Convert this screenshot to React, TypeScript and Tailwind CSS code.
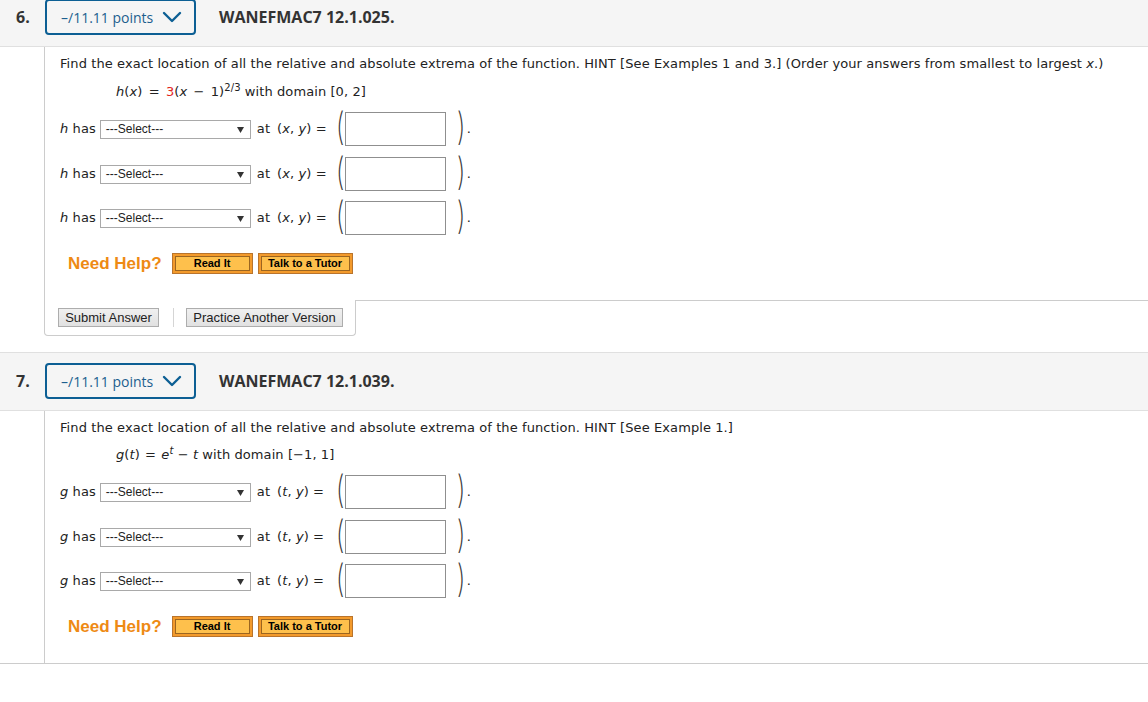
import React from "react";

const body = "font-['DejaVu_Sans',Verdana,sans-serif] text-[13px] text-[#222] tracking-[0.09px]";
const arial = "font-['Liberation_Sans',Arial,sans-serif] tracking-normal";

function Chevron() {
  return (
    <svg width="20" height="12" viewBox="0 0 20 12" className="ml-[9px]">
      <path d="M2 2 L10 10 L18 2" fill="none" stroke="#0c5f94" strokeWidth="2.4" strokeLinecap="round" strokeLinejoin="round" />
    </svg>
  );
}

function Header({ num, code, top }: { num: string; code: string; top?: boolean }) {
  return (
    <div
      className={`flex items-center bg-[#f5f5f5] border-b border-[#e0e0e0] pt-[10px] pb-[11px] ${
        top ? "-mt-[11px]" : "border-t"
      } font-['Open_Sans',sans-serif] tracking-normal`}>
      <div className="w-[45px] shrink-0 pl-[16px] text-[16px] font-bold text-[#333]">{num}</div>
      <div className="flex items-center w-[151px] h-[36px] border-2 border-[#0c5f94] rounded-[4px] pl-[14px] text-[14px] text-[#1c5f8e]">
        –/11.11 points
        <Chevron />
      </div>
      <div className="ml-[23px] text-[16px] font-bold text-[#333]">{code}</div>
    </div>
  );
}

function Select() {
  return (
    <div className={`relative flex items-center ml-[4px] w-[151px] h-[19px] border border-[#a9a9a9] bg-white pl-[5px] ${arial} text-[12px] text-[#222]`}>
      ---Select---
      <svg width="7" height="6" viewBox="0 0 7 6" className="absolute right-[6px] top-[6px]">
        <path d="M0 0 H7 L3.5 6 Z" fill="#333" />
      </svg>
    </div>
  );
}

function Paren({ ch }: { ch: string }) {
  return (
    <span className="inline-block w-[11px] text-center font-['Inter',sans-serif] font-extralight text-[38px] leading-none text-[#3a3a3a] scale-x-[0.7] -translate-y-[3px]">
      {ch}
    </span>
  );
}

function Row({ fn, v, mt }: { fn: string; v: string; mt: string }) {
  return (
    <div className={`flex items-center h-[34px] ${mt}`}>
      <span>
        <i>{fn}</i> has
      </span>
      <Select />
      <div className="flex items-center w-[94px] shrink-0">
        <span className="ml-[6px]">at</span>
        <span className="ml-[7px]">
          (<i>{v}</i>, <i>y</i>) =
        </span>
        <span className="ml-auto">
          <Paren ch="(" />
        </span>
      </div>
      <div className="w-[101px] h-[34px] border border-[#8f8f8f] bg-white" />
      <span className="ml-[9px]">
        <Paren ch=")" />
      </span>
      <span className="ml-[1px]">.</span>
    </div>
  );
}

function OrangeButton({ label, w }: { label: string; w: string }) {
  return (
    <div className={`${w} h-[21px] bg-[#f39a2b] border border-[#b9742c] p-[2px]`}>
      <div className={`h-full flex items-center justify-center bg-[#fec04c] border border-[#9b6520] ${arial} text-[11px] font-bold text-black`}>
        {label}
      </div>
    </div>
  );
}

function NeedHelp() {
  return (
    <div className="flex items-center h-[21px] mt-[18px] pl-[8px]">
      <span className={`${arial} text-[17px] font-bold text-[#ee8a14] mr-[10px]`}>Need Help?</span>
      <OrangeButton label="Read It" w="w-[81px]" />
      <div className="ml-[5px]">
        <OrangeButton label="Talk to a Tutor" w="w-[95px]" />
      </div>
    </div>
  );
}

function GrayButton({ label, w }: { label: string; w: string }) {
  return (
    <div className={`${w} h-[19px] flex items-center justify-center bg-gradient-to-b from-[#f0f0f0] to-[#e1e1e1] border border-[#adadad] ${arial} text-[13px] text-[#222]`}>
      {label}
    </div>
  );
}

export default function App() {
  return (
    <div className={`bg-white min-h-[702px] ${body}`}>
      <Header num="6." code="WANEFMAC7 12.1.025." top />
      <div className="flex">
        <div className="w-[44px] shrink-0" />
        <div className="flex-1">
          <div className="border-l border-[#ccc] pl-[15px] pt-[8px] pb-[26px]">
            <div className="leading-[18px]">
              Find the exact location of all the relative and absolute extrema of the function. HINT [See Examples 1 and 3.] (Order your answers from smallest to largest <i>x</i>.)
            </div>
            <div className="mt-[9px] leading-[20px] pl-[56px]">
              <i>h</i>(<i>x</i>) <span className="mx-[2px]">=</span> <span className="text-[#e2261c]">3</span>(<i>x</i>{" "}
              <span className="mx-[2px]">−</span> 1)
              <sup className="text-[10px] -top-[5px]">2/3</sup> with domain [0, 2]
            </div>
            <Row fn="h" v="x" mt="mt-[10px]" />
            <Row fn="h" v="x" mt="mt-[11px]" />
            <Row fn="h" v="x" mt="mt-[10px]" />
            <NeedHelp />
          </div>
          <div className="flex">
            <div className="w-[312px] h-[36px] flex items-center pl-[13px] border-l border-r border-b border-[#ccc] rounded-b-[4px]">
              <GrayButton label="Submit Answer" w="w-[101px]" />
              <div className="ml-[14px] w-px h-[19px] bg-[#d5d5d5]" />
              <div className="ml-[12px]">
                <GrayButton label="Practice Another Version" w="w-[157px]" />
              </div>
            </div>
            <div className="flex-1 border-t border-[#ccc]" />
          </div>
        </div>
      </div>

      <div className="mt-[16px]">
        <Header num="7." code="WANEFMAC7 12.1.039." />
      </div>
      <div className="flex border-b border-[#ccc]">
        <div className="w-[44px] shrink-0" />
        <div className="flex-1 border-l border-[#ccc] pl-[15px] pt-[8px] pb-[26px]">
          <div className="leading-[18px]">
            Find the exact location of all the relative and absolute extrema of the function. HINT [See Example 1.]
          </div>
          <div className="mt-[8px] leading-[20px] pl-[56px]">
            <i>g</i>(<i>t</i>) <span className="mx-[1px]">=</span> <i>e</i>
            <sup className="text-[10px] -top-[5px]">
              <i>t</i>
            </sup>{" "}
            <span>−</span> <i>t</i> with domain [−1, 1]
          </div>
          <Row fn="g" v="t" mt="mt-[10px]" />
          <Row fn="g" v="t" mt="mt-[11px]" />
          <Row fn="g" v="t" mt="mt-[10px]" />
          <NeedHelp />
        </div>
      </div>
    </div>
  );
}
